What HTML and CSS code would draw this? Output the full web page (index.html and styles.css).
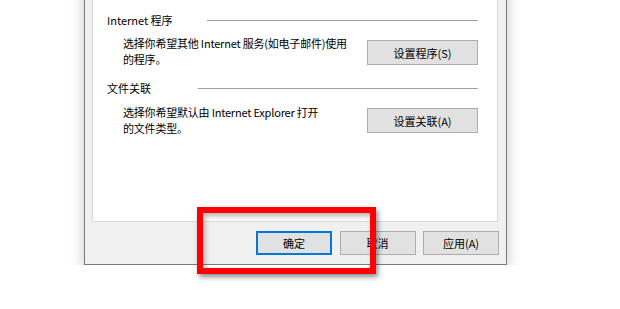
FILE: index.html
```html
<!DOCTYPE html>
<html lang="zh-CN">
<head>
  <meta charset="UTF-8" />
  <meta name="viewport" content="width=device-width, initial-scale=1.0" />
  <title>Internet 选项 - 程序</title>
  <link rel="stylesheet" href="styles.css">
</head>
<body>
  <div class="dialog">
    <div class="tab-page">
      <div class="group">
        <div class="group-title">
          <span>Internet 程序</span>
          <span class="sep sep-programs"></span>
        </div>
        <div class="group-body">
          <p class="desc">选择你希望其他 Internet 服务(如电子邮件)使用<br>的程序。</p>
          <button class="btn btn-side">设置程序(S)</button>
        </div>
      </div>

      <div class="group group-assoc">
        <div class="group-title">
          <span>文件关联</span>
          <span class="sep sep-assoc"></span>
        </div>
        <div class="group-body">
          <p class="desc">选择你希望默认由 Internet Explorer 打开<br>的文件类型。</p>
          <button class="btn btn-side">设置关联(A)</button>
        </div>
      </div>
    </div>

    <div class="actions">
      <button class="btn btn-main btn-default">确定</button>
      <button class="btn btn-main">取消</button>
      <button class="btn btn-main">应用(A)</button>
    </div>
  </div>

  <div class="highlight"></div>
</body>
</html>
```

FILE: styles.css
```css
* { box-sizing: border-box; }
body {
  margin: 0;
  background: #fff;
  font-family: "Segoe UI", "Noto Sans CJK SC", sans-serif;
  font-size: 11px;
  color: #000;
  overflow: hidden;
}
.dialog {
  width: 423px;
  margin: -40px 0 0 84px;
  padding: 0 8px 9px 7px;
  background: #f0f0f0;
  border: 1px solid #7a7a7a;
  box-shadow: 0 5px 14px rgba(0,0,0,0.22);
}
.tab-page {
  height: 261px;
  background: #fff;
  border: 1px solid #d9d9d9;
  padding: 51px 19px 0 14px;
}
.group-title {
  display: flex;
  align-items: center;
  height: 14px;
  line-height: 14px;
}
.sep {
  flex: 1;
  height: 1px;
  background: #a0a0a0;
}
.sep-programs { margin-left: 34px; }
.sep-assoc { margin-left: 47px; }
.group-assoc {
  margin-top: 14px;
}
.group-body {
  display: flex;
  align-items: flex-start;
  margin-top: 8px;
}
.group-assoc .group-body {
  margin-top: 9px;
}
.group-assoc .btn-side {
  margin-top: 4px;
}
.desc {
  margin: 0 0 0 16px;
  line-height: 16px;
  letter-spacing: -0.2px;
  white-space: nowrap;
}
.btn {
  font-family: inherit;
  font-size: 11px;
  color: #000;
  background: #e1e1e1;
  border: 1px solid #adadad;
  padding: 0;
}
.btn-side {
  margin: 5px 0 0 auto;
  width: 111px;
  height: 25px;
}
.actions {
  display: flex;
  justify-content: flex-end;
  gap: 7.5px;
  margin: 9px -1px 0 0;
}
.btn-main {
  width: 76px;
  height: 24px;
}
.btn-default {
  border-color: #0078d7;
  box-shadow: inset 0 0 0 1px #0078d7;
}
.highlight {
  position: absolute;
  left: 197px;
  top: 207px;
  width: 179px;
  height: 67px;
  border: 6px solid #f00;
  box-shadow: 2px 3px 5px rgba(0,0,0,0.45), inset 2px 3px 5px rgba(0,0,0,0.3);
}
```
